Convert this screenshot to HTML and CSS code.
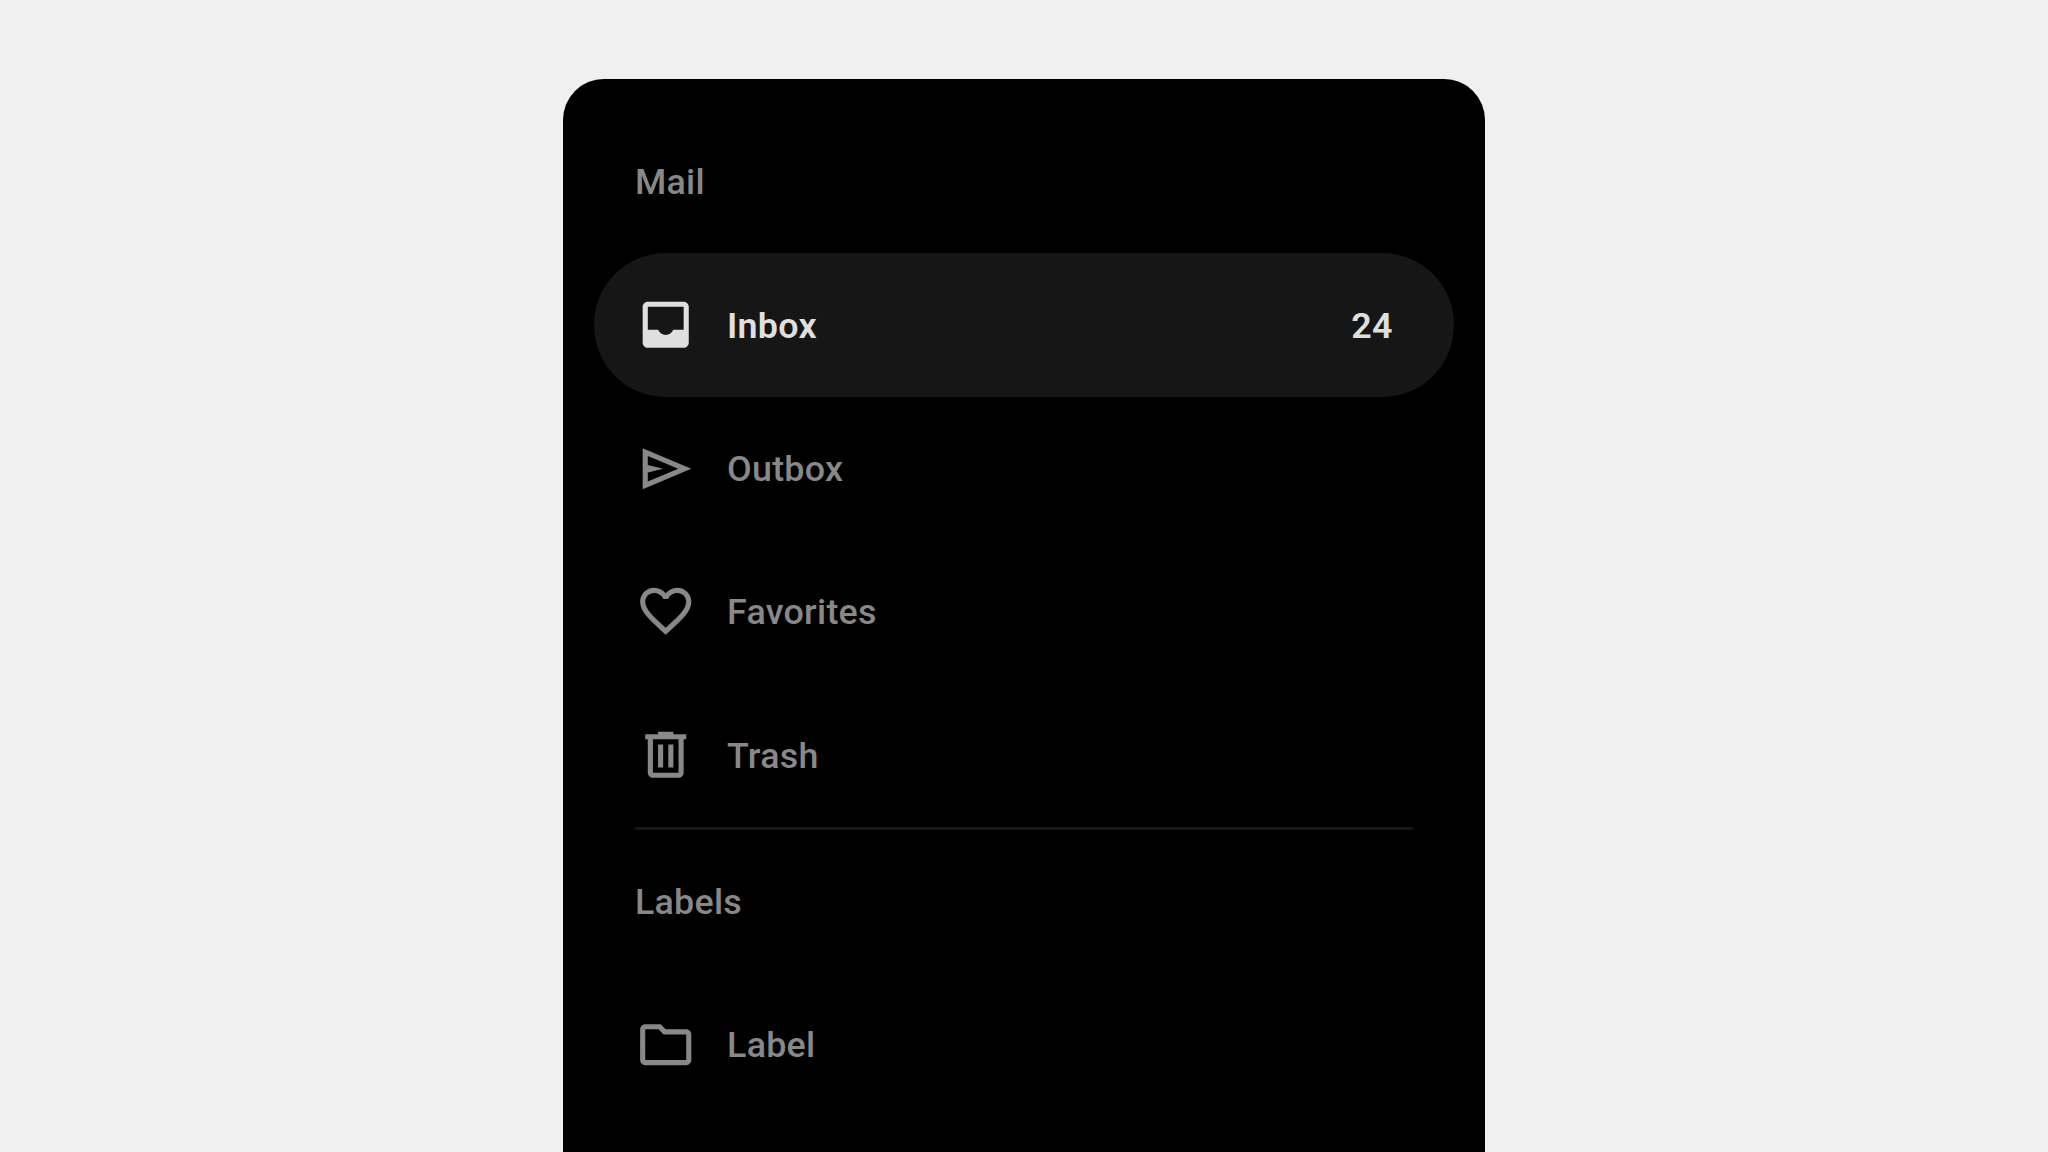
FILE: index.html
```
<!DOCTYPE html>
<html lang="en">
<head>
  <meta charset="UTF-8">
  <title>Mail navigation drawer</title>
  <link rel="stylesheet" href="styles.css">
</head>
<body>

  <nav class="drawer">
    <h2 class="headline">Mail</h2>

    <a class="item active">
      <svg class="icon" viewBox="0 0 24 24"><path d="M19 3H5c-1.1 0-2 .9-2 2v14c0 1.1.9 2 2 2h14c1.1 0 2-.9 2-2V5c0-1.1-.9-2-2-2zm0 11h-4.05c-.45 1.2-1.6 2-2.95 2s-2.5-.8-2.95-2H5V5h14v9z"/></svg>
      <span class="label">Inbox</span>
      <span class="badge">24</span>
    </a>
    <a class="item">
      <svg class="icon" viewBox="0 0 24 24"><path d="M3 20V4l19 8-19 8zm2-3l11.85-5L5 7v3.5l6 1.5-6 1.5V17z"/></svg>
      <span class="label">Outbox</span>
    </a>
    <a class="item">
      <svg class="icon" viewBox="0 .35 24 24"><path d="M16.5 3c-1.74 0-3.41.81-4.5 2.09C10.91 3.81 9.24 3 7.5 3 4.42 3 2 5.42 2 8.5c0 3.78 3.4 6.86 8.55 11.54L12 21.35l1.45-1.32C18.6 15.36 22 12.28 22 8.5 22 5.42 19.58 3 16.5 3zm-4.4 15.55l-.1.1-.1-.1C7.14 14.24 4 11.39 4 8.5 4 6.5 5.5 5 7.5 5c1.54 0 3.04.99 3.57 2.36h1.87C13.46 5.99 14.96 5 16.5 5c2 0 3.5 1.5 3.5 3.5 0 2.89-3.14 5.74-7.9 10.05z"/></svg>
      <span class="label">Favorites</span>
    </a>
    <a class="item">
      <svg class="icon" viewBox="0 0 24 24"><path d="M7 21c-.55 0-1.02-.2-1.41-.59C5.2 20.02 5 19.55 5 19V6H4V4h5V3h6v1h5v2h-1v13c0 .55-.2 1.02-.59 1.41-.39.39-.86.59-1.41.59H7zM17 6H7v13h10V6zM9 17h2V8H9v9zm4 0h2V8h-2v9z"/></svg>
      <span class="label">Trash</span>
    </a>

    <hr class="divider">
    <h2 class="headline">Labels</h2>

    <a class="item">
      <svg class="icon" viewBox="0 0 24 24"><path d="M9.17 6l2 2H20v10H4V6h5.17M10 4H4c-1.1 0-1.99.9-1.99 2L2 18c0 1.1.9 2 2 2h16c1.1 0 2-.9 2-2V8c0-1.1-.9-2-2-2h-8l-2-2z"/></svg>
      <span class="label">Label</span>
    </a>
  </nav>

</body>
</html>
```
FILE: styles.css
```
/* Base */
:root { --dp: 2.56px; }
* { box-sizing: border-box; margin: 0; padding: 0; }
body {
  height: 100vh;
  overflow: hidden;
  display: flex;
  justify-content: center;
  background: #f0f0f0;
  font-family: Roboto, sans-serif;
  font-size: calc(14 * var(--dp));
  font-weight: 500;
  line-height: calc(20 * var(--dp));
  letter-spacing: calc(0.1 * var(--dp));
  color: #888;
}

/* Drawer */
.drawer {
  width: calc(360 * var(--dp));
  height: calc(100vh - 31 * var(--dp));
  flex-shrink: 0;
  margin-top: calc(31 * var(--dp));
  padding: calc(12 * var(--dp));
  background: #000;
  border-radius: calc(16 * var(--dp)) calc(16 * var(--dp)) 0 0;
}
.headline {
  height: calc(56 * var(--dp));
  padding: calc(18.4 * var(--dp)) calc(16 * var(--dp)) 0;
  font-size: inherit;
  font-weight: 500;
}
.divider {
  height: 3px;
  margin: 0 calc(16 * var(--dp));
  border: none;
  background: #171717;
}

/* Items */
.item {
  display: flex;
  align-items: center;
  height: calc(56 * var(--dp));
  padding: 0 calc(24 * var(--dp)) 0 calc(16 * var(--dp));
  border-radius: calc(28 * var(--dp));
}
.item.active {
  background: #161616;
  color: #dfdfdf;
  font-weight: 600;
}
.icon {
  width: calc(24 * var(--dp));
  height: calc(24 * var(--dp));
  margin-right: calc(12 * var(--dp));
  fill: currentColor;
}
.label, .badge { padding-top: 2px; }
.label { flex: 1; }
```
